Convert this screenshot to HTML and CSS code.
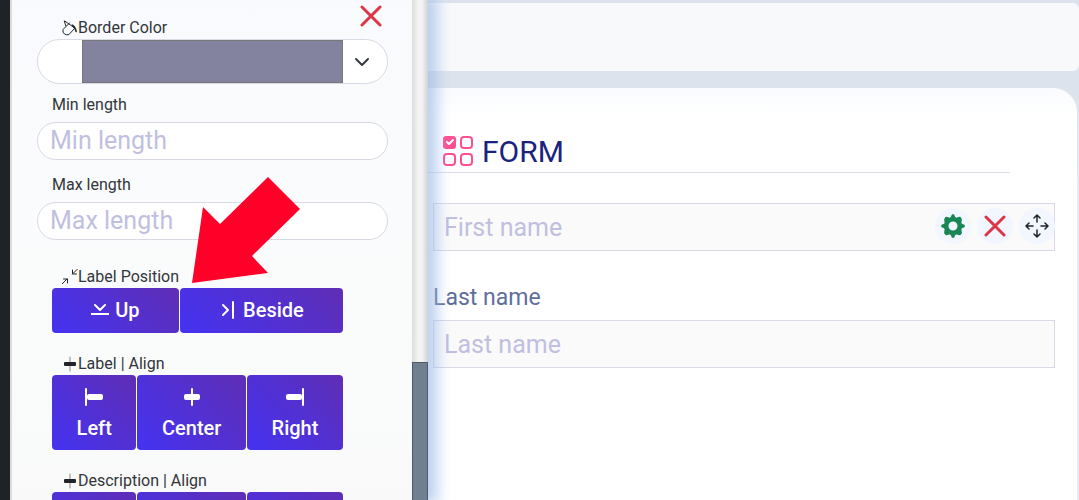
FILE: index.html
```html
<!DOCTYPE html>
<html lang="en">

<head>
    <meta charset="UTF-8">
    <meta name="viewport" content="width=device-width, initial-scale=1.0">
    <title>Form Builder</title>
    <link rel="stylesheet" href="styles.css">
</head>

<body>
    <div class="rail"></div>
    <aside class="panel">
        <div class="settings">
            <button type="button" class="close" aria-label="Close">
                <svg class="icon-x" viewBox="0 0 22 22"><path d="M2 2L20 20M20 2L2 20" /></svg>
            </button>

            <label class="title with-icon" for="border-color">
                <svg viewBox="0 0 16 16"><path d="M2.300 1l1.500 4.800M3 1.200L12 7.500M7.500 3L1 9.500q-.6 3 1.500 4.500q1.700 1.500 4.500.5L12.500 8.500" /><path class="solid" d="M9.500 4q4.500 1.500 5.500 8q-1.700 1-2-1.500q0-2-2-3z" /></svg>
                Border Color
            </label>
            <div class="color-box">
                <input type="color" id="border-color" value="#8383a0">
                <button type="button" class="more" aria-label="More colors">
                    <svg viewBox="0 0 16 16"><path d="M2 5l6 6l6-6" /></svg>
                </button>
            </div>

            <label class="title" for="min">Min length</label>
            <input type="text" class="pill" id="min" placeholder="Min length">

            <label class="title" for="max">Max length</label>
            <input type="text" class="pill" id="max" placeholder="Max length">

            <div class="group first">
                <div class="title with-icon">
                    <svg viewBox="0 0 16 16"><path d="M0 15l5-5M1.500 10h4v4M15.500 0l-5 5M10.500 1v4h4" /></svg>
                    Label Position
                </div>
                <div class="btns">
                    <button type="button" class="btn">
                        <svg viewBox="0 0 18 18"><path d="M4 4l5 5l5-5M0 13h18" /></svg>
                        Up
                    </button>
                    <button type="button" class="btn">
                        <svg viewBox="0 0 18 18"><path d="M4 4l5 5l-5 5M14 1v16" /></svg>
                        Beside
                    </button>
                </div>
            </div>

            <div class="group">
                <div class="title with-icon">
                    <svg viewBox="0 0 16 16"><path class="thin" d="M8 1v14" /><rect class="solid" x="2" y="6" width="12" height="4" rx="1" /></svg>
                    Label | Align
                </div>
                <div class="btns">
                    <button type="button" class="btn tall">
                        <svg viewBox="0 0 18 18"><path d="M1 1v16" /><rect class="solid" x="2" y="6" width="16" height="6" rx="2" /></svg>
                        Left
                    </button>
                    <button type="button" class="btn tall">
                        <svg viewBox="0 0 18 18"><path d="M9 1v16" /><rect class="solid" x="1" y="6" width="16" height="6" rx="2" /></svg>
                        Center
                    </button>
                    <button type="button" class="btn tall">
                        <svg viewBox="0 0 18 18"><path d="M17 1v16" /><rect class="solid" x="0" y="6" width="16" height="6" rx="2" /></svg>
                        Right
                    </button>
                </div>
            </div>

            <div class="group">
                <div class="title with-icon">
                    <svg viewBox="0 0 16 16"><path class="thin" d="M8 1v14" /><rect class="solid" x="2" y="6" width="12" height="4" rx="1" /></svg>
                    Description | Align
                </div>
                <div class="btns">
                    <button type="button" class="btn tall">
                        <svg viewBox="0 0 18 18"><path d="M1 1v16" /><rect class="solid" x="2" y="6" width="16" height="6" rx="2" /></svg>
                        Left
                    </button>
                    <button type="button" class="btn tall">
                        <svg viewBox="0 0 18 18"><path d="M9 1v16" /><rect class="solid" x="1" y="6" width="16" height="6" rx="2" /></svg>
                        Center
                    </button>
                    <button type="button" class="btn tall">
                        <svg viewBox="0 0 18 18"><path d="M17 1v16" /><rect class="solid" x="0" y="6" width="16" height="6" rx="2" /></svg>
                        Right
                    </button>
                </div>
            </div>

            <svg class="pointer" viewBox="192 177 108 106"><path d="M268 177L300 209L252 256L268 273L192 283L203 207L220 224Z" /></svg>
        </div>
        <div class="track">
            <div class="thumb"></div>
        </div>
    </aside>

    <main>
        <div class="topbar"></div>
        <form class="card" action="#" method="get">
            <h1>
                <svg viewBox="0 0 30 30">
                    <rect class="solid" x="0" y="0" width="13" height="13" rx="3" />
                    <rect x="18" y="1" width="11" height="11" rx="3" />
                    <rect x="1" y="18" width="11" height="11" rx="3" />
                    <rect x="18" y="18" width="11" height="11" rx="3" />
                    <path d="M4 6l2 2l4-4" />
                </svg>
                FORM
            </h1>
            <div class="field">
                <input type="text" placeholder="First name" aria-label="First name">
                <div class="tools">
                    <button type="button" aria-label="Settings">
                        <svg class="gear" viewBox="0 0 24 24"><path fill-rule="evenodd" d="M12 0Q13.500 0 14 2.500Q14.500 4 16 3.500Q19 2 20 3.500Q21.500 5 20.500 8Q20 9.500 21.500 10Q24 10.500 24 12Q24 13.500 21.500 14Q20 14.500 20.500 16Q21.500 19 20 20.500Q19 22 16 20.500Q14.500 20 14 21.500Q13.500 24 12 24Q10.500 24 10 21.500Q9.500 20 8 20.500Q5 22 4 20.500Q2.500 19 3.500 16Q4 14.500 2.500 14Q0 13.500 0 12Q0 10.500 2.500 10Q4 9.500 3.500 8Q2.500 5 4 3.500Q5 2 8 3.500Q9.500 4 10 2.500Q10.500 0 12 0ZM12 7.500A4.500 4.500 0 1 0 12 16.500A4.500 4.500 0 1 0 12 7.500Z" /></svg>
                    </button>
                    <button type="button" aria-label="Delete">
                        <svg class="icon-x" viewBox="0 0 22 22"><path d="M2 2L20 20M20 2L2 20" /></svg>
                    </button>
                    <button type="button" aria-label="Move">
                        <svg class="move" viewBox="0 0 24 24"><path d="M12 8V1M9 4l3-3l3 3M12 16v7M9 20l3 3l3-3M8 12H1M4 9l-3 3l3 3M16 12h7M20 9l3 3l-3 3" /></svg>
                    </button>
                </div>
            </div>
            <div class="field">
                <label for="lname">Last name</label>
                <input type="text" id="lname" placeholder="Last name">
            </div>
        </form>
    </main>
</body>

</html>
```

FILE: styles.css
```css
* {
    padding: 0;
    margin: 0;
    box-sizing: border-box;
}

body {
    display: flex;
    height: 100vh;
    overflow: hidden;
    font-family: Roboto, "Liberation Sans", sans-serif;
    color: #32363a;
}

button,
input {
    font-family: inherit;
}

button {
    border: none;
    background: none;
    cursor: pointer;
}

svg {
    display: block;
    fill: none;
    stroke: currentColor;
    stroke-linecap: round;
    stroke-linejoin: round;
}

svg .solid {
    fill: currentColor;
    stroke: none;
}

.rail {
    flex: 0 0 10px;
    /* keeps the panel shadow off the rail */
    z-index: 2;
    background-color: #1e2327;
}

/* Settings panel */
.panel {
    display: flex;
    flex: 0 0 418px;
    position: relative;
    z-index: 1;
    height: 100vh;
    border-inline-start: 2px solid #dcdcde;
    background: linear-gradient(#f9fafd, #fafcfc 60%, #f9f9f9);
    box-shadow: 6px 0 12px 4px rgb(160 188 232 / 0.65);
}

.settings {
    flex: 1;
    padding: 15px 24px 0 25px;
    overflow: hidden;
}

.close {
    position: absolute;
    top: 5px;
    right: 46px;
}

.icon-x {
    width: 22px;
    height: 22px;
    color: #dc3545;
    stroke-width: 3;
}

.title {
    display: flex;
    align-items: center;
    margin-inline-start: 15px;
    padding-block-start: 2px;
    font-size: 16px;
    line-height: 22px;
}

.title.with-icon {
    margin-inline-start: 25px;
}

.title svg {
    width: 16px;
    height: 16px;
    color: #212529;
}

.title .thin {
    color: #888;
}

.color-box {
    display: flex;
    height: 45px;
    margin-block-end: 8px;
    padding-inline-start: 44px;
    border: 1px solid #d9d9e3;
    border-radius: 24px;
    background-color: white;
}

.color-box input {
    flex: 1;
    height: 100%;
    min-width: 0;
    appearance: none;
    border: none;
    background: none;
}

.color-box input::-webkit-color-swatch-wrapper {
    padding: 0;
}

.color-box input::-webkit-color-swatch {
    border: 1px solid #777;
    border-radius: 0;
}

.more {
    width: 44px;
    padding-inline-start: 11px;
    color: #343a40;
}

.more svg {
    width: 16px;
    height: 16px;
    stroke-width: 2;
}

.pill {
    display: block;
    width: 100%;
    height: 38px;
    margin-block: 6px 12px;
    padding: 0 12px 2px;
    border: 1px solid #d9d9e3;
    border-radius: 19px;
    background-color: white;
    font-size: 25px;
}

input::placeholder {
    color: #c1bfe0;
}

.group {
    margin-block-start: 18px;
}

.group.first {
    margin-block-start: 24px;
}

.btns {
    display: flex;
    gap: 1px;
    margin-inline: 15px 45px;
}

.btn {
    display: flex;
    flex: 1 1 auto;
    align-items: center;
    justify-content: center;
    gap: 6px;
    height: 45px;
    padding: 0 24px 2px;
    border-radius: 4px;
    background: linear-gradient(45deg, #4433f2, #5f2eb5);
    color: white;
    font-size: 20px;
    font-weight: 500;
    line-height: 30px;
}

.btn.tall {
    flex-direction: column;
    gap: 7px;
    height: 75px;
    padding-block: 5px 0;
}

.btn svg {
    width: 18px;
    height: 18px;
    stroke-width: 2;
}

.pointer {
    position: absolute;
    left: 180px;
    top: 177px;
    width: 108px;
    height: 106px;
    color: #ff0028;
    fill: currentColor;
    stroke: none;
}

.track {
    flex: 0 0 16px;
    height: 100vh;
    overflow: hidden;
    background: linear-gradient(90deg, #dcdcdc, #f4f4f4 40%, #f4f4f4 60%, #d0d2d6);
}

.thumb {
    height: 100%;
    margin-block-start: 362px;
    border: 1px solid #4e5a6c;
    background-color: #708090;
}

/* Form preview */
main {
    display: flex;
    flex: 1;
    flex-direction: column;
    min-width: 0;
    padding-block-start: 3px;
    background: linear-gradient(#dde3ed 90px, #e6eaf2 180px);
}

.topbar {
    flex: 0 0 68px;
    margin-block-end: 17px;
    border-radius: 0 6px 6px 0;
    background-color: #f7f9fb;
}

.card {
    flex: 1;
    margin-inline-end: 2px;
    padding: 44px 22px 0 0;
    border-start-end-radius: 24px;
    background: linear-gradient(#f9fbfe, white 28px);
}

h1 {
    display: flex;
    align-items: center;
    gap: 9px;
    height: 41px;
    margin-inline-end: 45px;
    padding: 0 0 2px 15px;
    border-block-end: 1px solid #dcdee6;
    color: #1a237e;
    font-size: 30px;
    font-weight: normal;
}

h1 svg {
    width: 30px;
    height: 30px;
    color: #ff4f93;
    stroke-width: 2;
}

h1 path {
    stroke: white;
}

.field {
    position: relative;
    margin: 30px 0 0 5px;
}

.field label {
    display: block;
    padding-block: 2px 7px;
    color: #5f6f9c;
    font-size: 23px;
    line-height: 30px;
}

.field input {
    display: block;
    width: 100%;
    height: 48px;
    padding: 0 10px;
    border: 1px solid #d9d9e3;
    background-color: #fafafa;
    font-size: 25px;
}

.tools {
    display: flex;
    gap: 6px;
    position: absolute;
    top: 5px;
    right: 0;
}

.tools button {
    display: flex;
    align-items: center;
    justify-content: center;
    width: 36px;
    height: 36px;
    border-radius: 50%;
    background-color: #f1f6ff;
}

.gear,
.move {
    width: 24px;
    height: 24px;
}

.gear {
    fill: #198754;
    stroke: none;
}

.move {
    color: #212529;
    stroke-width: 1.5;
}
```
